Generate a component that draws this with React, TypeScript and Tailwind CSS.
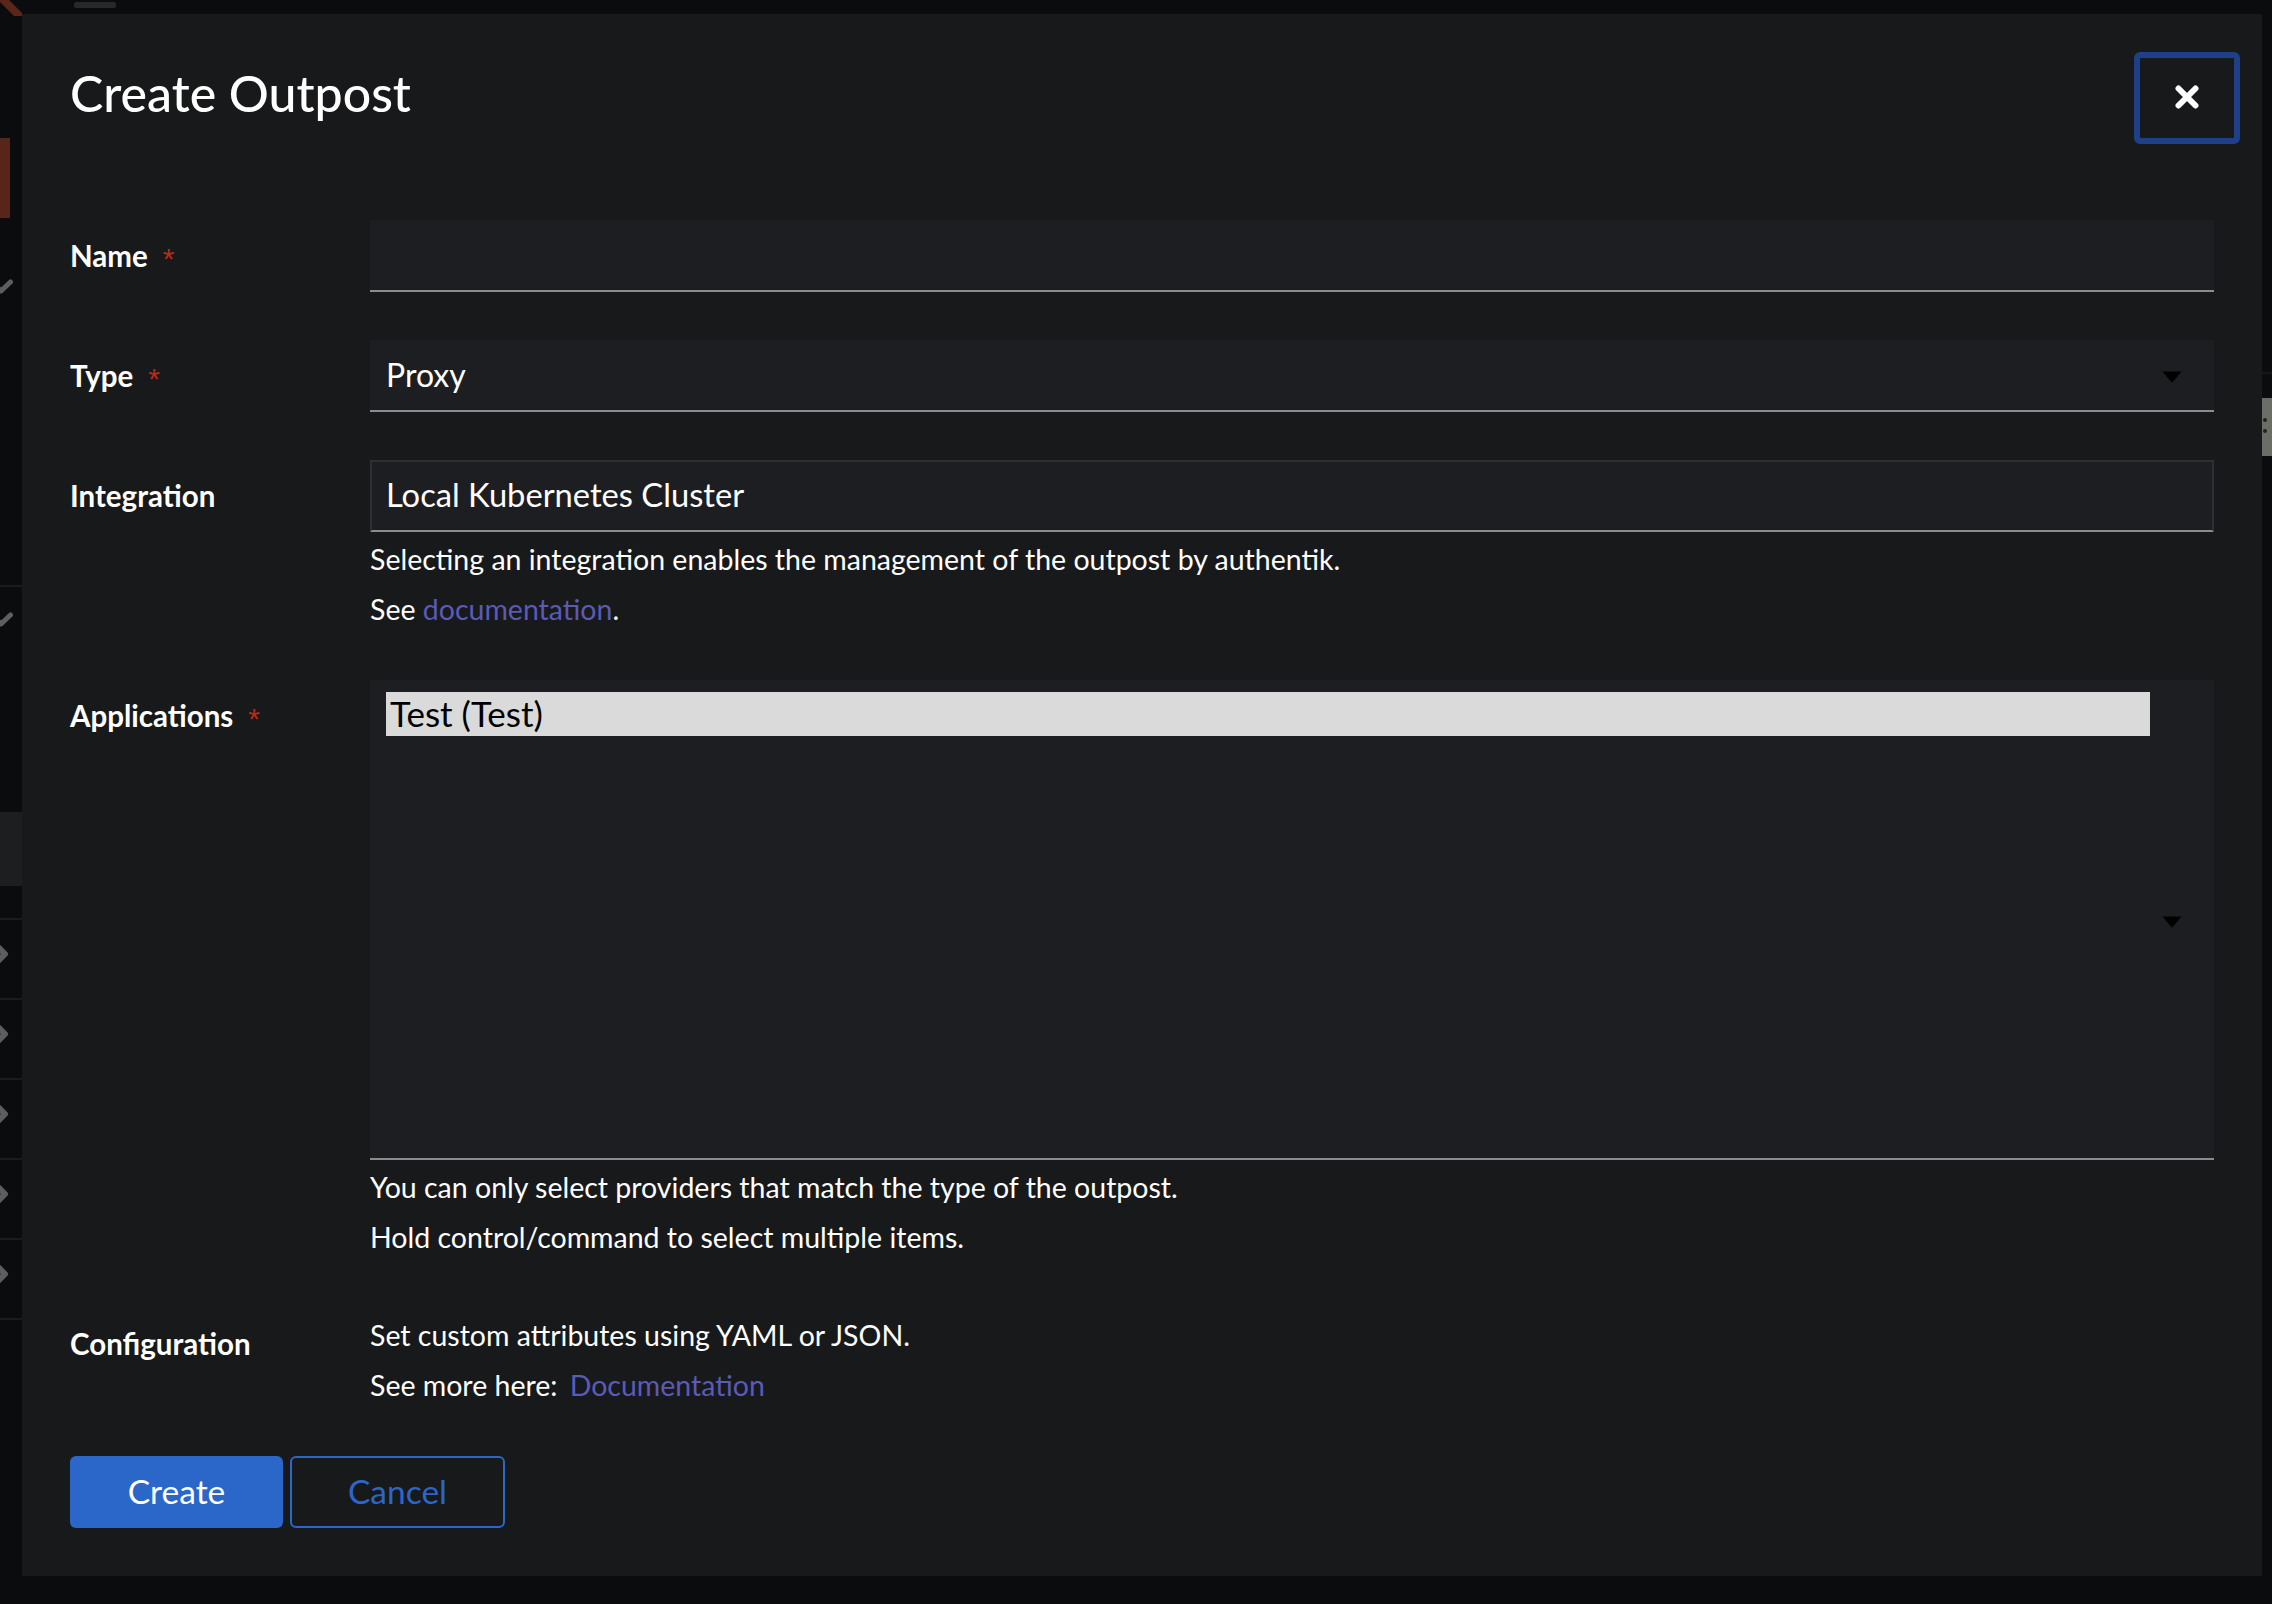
import type { ReactNode } from 'react'

const sans = 'font-["Lato","Liberation_Sans",sans-serif]'

function Caret() {
  return (
    <svg width="20" height="12" viewBox="0 0 20 12" className="block">
      <path d="M0.5 0.5H19.5L11 10.8Q10 11.8 9 10.8Z" fill="#000" />
    </svg>
  )
}

function Check() {
  return (
    <svg width="14" height="16" viewBox="0 0 14 16" className="block">
      <path d="M-4 8L1 13L10.5 4" fill="none" stroke="#5e5e5e" strokeWidth="5" strokeLinecap="round" strokeLinejoin="round" />
    </svg>
  )
}

function Chevron() {
  return (
    <svg width="9" height="18" viewBox="0 0 9 18" className="block">
      <path d="M-2 2L5 9L-2 16" fill="none" stroke="#5e5e5e" strokeWidth="6" strokeLinejoin="round" />
    </svg>
  )
}

function LeftStrip() {
  return (
    <div className="flex w-[22px] shrink-0 flex-col bg-[#0b0c0e]">
      <svg width="22" height="16" viewBox="0 0 22 16" className="block shrink-0">
        <path d="M0 0H9L22 13L22 16H14L0 2Z" fill="#5b2619" />
      </svg>
      <div className="mt-[122px] h-[80px] w-[10px] bg-[#57251b]" />
      <div className="mt-[60px]">
        <Check />
      </div>
      <div className="mt-[291px] h-[2px] bg-[#1b1c1f]" />
      <div className="mt-[24px]">
        <Check />
      </div>
      <div className="mt-[185px] h-[74px] bg-[#1c1e20]" />
      <div className="mt-[32px] h-[2px] bg-[#1b1c1f]" />
      {[0, 1, 2, 3, 4].map((i) => (
        <div key={i} className="flex h-[80px] flex-col">
          <div className="flex flex-1 items-center pb-[10px]">
            <Chevron />
          </div>
          <div className="h-[2px] bg-[#1b1c1f]" />
        </div>
      ))}
    </div>
  )
}

function RightStrip() {
  return (
    <div className="flex w-[10px] shrink-0 flex-col bg-[#0b0c0e]">
      <div className="mt-[372px] h-[2px] bg-[#15171a]" />
      <div className="mt-[24px] flex h-[58px] flex-col gap-[7px] bg-[#6a6e67] pl-[1px] pt-[20px]">
        <div className="h-[4px] w-[4px] rounded-full bg-[#20241e]" />
        <div className="h-[4px] w-[4px] rounded-full bg-[#20241e]" />
      </div>
    </div>
  )
}

function Row({ label, required, children }: { label: string; required?: boolean; children: ReactNode }) {
  return (
    <div className="grid grid-cols-[300px_1fr]">
      <div className="flex pt-[15px] text-[29.5px] leading-[42px] font-bold text-white">
        <span>{label}</span>
        {required && (
          <span className='ml-[15px] mt-[3px] font-["Liberation_Sans",sans-serif] text-[30px] leading-[42px] font-normal text-[#b72b1a]'>*</span>
        )}
      </div>
      <div>{children}</div>
    </div>
  )
}

function Help({ children }: { children: ReactNode }) {
  return <p className="pb-[2px] pt-[6px] text-[28.5px] leading-[42px] text-white">{children}</p>
}

export default function App() {
  return (
    <div className={`flex h-[1604px] w-[2272px] overflow-hidden bg-[#0b0c0e] ${sans}`}>
      <LeftStrip />
      <div className="flex flex-1 flex-col">
        <div className="h-[14px] pl-[52px] pt-[2px]">
          <div className="h-[6px] w-[42px] rounded-[2px] bg-[#26282b]" />
        </div>
        <div className="h-[1562px] bg-[#18191b] px-[48px] pt-[38px]">
          <div className="flex items-start justify-between">
            <h1 className="pt-[13px] text-[50px] leading-[56px] font-medium text-white">Create Outpost</h1>
            <button className="mr-[-26px] flex h-[92px] w-[106px] items-center justify-center rounded-[6px] border-[6px] border-[#1f4088] pb-[3px]">
              <svg width="24" height="24" viewBox="0 0 24 24">
                <path d="M3.5 3.5L20.5 20.5M20.5 3.5L3.5 20.5" stroke="#fff" strokeWidth="6" strokeLinecap="round" />
              </svg>
            </button>
          </div>

          <div className="mt-[76px] flex flex-col gap-[48px]">
            <Row label="Name" required>
              <div className="h-[72px] border-b-2 border-[#8a8d90] bg-[#1d1e22]" />
            </Row>

            <Row label="Type" required>
              <div className="flex h-[72px] items-center justify-between border-b-2 border-[#8a8d90] bg-[#1d1e22] pl-[16px] pr-[32px]">
                <span className="text-[32px] text-white">Proxy</span>
                <div className="mt-[4px]">
                  <Caret />
                </div>
              </div>
            </Row>

            <Row label="Integration">
              <div className="flex h-[72px] items-center border-2 border-[#2d2f33] border-b-[#8a8d90] bg-[#1d1e22] pb-[2px] pl-[14px]">
                <span className="text-[32.7px] text-white">Local Kubernetes Cluster</span>
              </div>
              <Help>Selecting an integration enables the management of the outpost by authentik.</Help>
              <Help>
                See <span className="text-[#5a5bb5]">documentation</span>.
              </Help>
            </Row>

            <Row label="Applications" required>
              <div className="flex h-[480px] items-start border-b-2 border-[#8a8d90] bg-[#1d1e22] pl-[16px] pr-[32px] pt-[12px]">
                <div className="flex h-[44px] flex-1 items-center bg-[#dadada] pb-[2px] pl-[4px] text-[35px] text-black">Test (Test)</div>
                <div className="ml-[12px] mt-[224px]">
                  <Caret />
                </div>
              </div>
              <Help>You can only select providers that match the type of the outpost.</Help>
              <Help>Hold control/command to select multiple items.</Help>
            </Row>

            <Row label="Configuration">
              <div className="pt-[6px]">
                <p className="pb-[2px] text-[28.5px] leading-[42px] text-white">Set custom attributes using YAML or JSON.</p>
                <Help>
                  See more here: <span className="ml-[5px] text-[#5a5bb5]">Documentation</span>
                </Help>
              </div>
            </Row>
          </div>

          <div className="mt-[48px] flex gap-[7px]">
            <button className="h-[72px] w-[213px] rounded-[6px] bg-[#2b66c9] pb-[2px] text-[33.5px] text-white">Create</button>
            <button className="h-[72px] w-[215px] rounded-[6px] border-2 border-[#2b66c9] pb-[2px] text-[33.5px] text-[#2b66c9]">Cancel</button>
          </div>
        </div>
      </div>
      <RightStrip />
    </div>
  )
}
